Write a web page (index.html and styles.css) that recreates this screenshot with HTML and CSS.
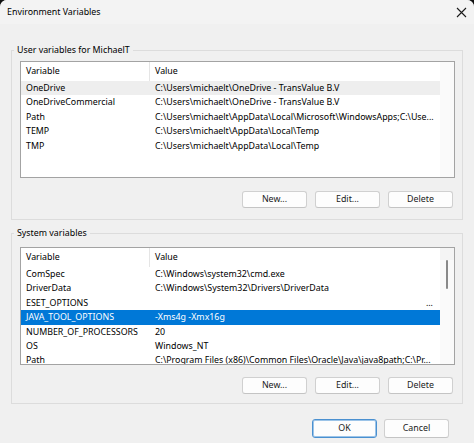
FILE: index.html
```html
<!DOCTYPE html>
<html>
<head>
<meta charset="utf-8">
<link rel="stylesheet" href="styles.css">
</head>
<body>
<div class="frame">
  <div class="window">
    <div class="titlebar">
      <span class="title">Environment Variables</span>
      <svg class="close" width="11" height="11" viewBox="0 0 11 11"><path d="M1 1 L10 10 M10 1 L1 10" stroke="#1a1a1a" stroke-width="1.1" fill="none"/></svg>
    </div>

    <fieldset class="group group-user">
      <legend>User variables for MichaelT</legend>
      <div class="list list-user">
        <div class="list-main">
          <div class="row head"><span class="c1">Variable</span><span class="c2">Value</span></div>
          <div class="row hover"><span class="c1">OneDrive</span><span class="c2">C:\Users\michaelt\OneDrive - TransValue B.V</span></div>
          <div class="row"><span class="c1">OneDriveCommercial</span><span class="c2">C:\Users\michaelt\OneDrive - TransValue B.V</span></div>
          <div class="row"><span class="c1">Path</span><span class="c2">C:\Users\michaelt\AppData\Local\Microsoft\WindowsApps;C:\Use...</span></div>
          <div class="row"><span class="c1">TEMP</span><span class="c2">C:\Users\michaelt\AppData\Local\Temp</span></div>
          <div class="row"><span class="c1">TMP</span><span class="c2">C:\Users\michaelt\AppData\Local\Temp</span></div>
        </div>
        <div class="gutter"></div>
      </div>
      <div class="buttons">
        <button class="btn">New...</button>
        <button class="btn">Edit...</button>
        <button class="btn">Delete</button>
      </div>
    </fieldset>

    <fieldset class="group group-sys">
      <legend>System variables</legend>
      <div class="list list-sys">
        <div class="list-main">
          <div class="row head"><span class="c1">Variable</span><span class="c2">Value</span></div>
          <div class="row"><span class="c1">ComSpec</span><span class="c2">C:\Windows\system32\cmd.exe</span></div>
          <div class="row"><span class="c1">DriverData</span><span class="c2">C:\Windows\System32\Drivers\DriverData</span></div>
          <div class="row"><span class="c1">ESET_OPTIONS</span><span class="c2 dots">...</span></div>
          <div class="row selected"><span class="c1">JAVA_TOOL_OPTIONS</span><span class="c2">-Xms4g -Xmx16g</span></div>
          <div class="row"><span class="c1">NUMBER_OF_PROCESSORS</span><span class="c2">20</span></div>
          <div class="row"><span class="c1">OS</span><span class="c2">Windows_NT</span></div>
          <div class="row"><span class="c1">Path</span><span class="c2">C:\Program Files (x86)\Common Files\Oracle\Java\java8path;C:\Pr...</span></div>
        </div>
        <div class="gutter scroll">
          <div class="gutter-top"></div>
          <div class="thumb"></div>
        </div>
      </div>
      <div class="buttons">
        <button class="btn">New...</button>
        <button class="btn">Edit...</button>
        <button class="btn">Delete</button>
      </div>
    </fieldset>

    <div class="footer">
      <button class="btn btn-default">OK</button>
      <button class="btn">Cancel</button>
    </div>
  </div>
</div>
</body>
</html>
```

FILE: styles.css
```css
html, body {
  margin: 0;
  padding: 0;
  background: #ffffff;
}

.frame {
  width: 474px;
  height: 448px;
  background: linear-gradient(#111 0, #111 12px, #ffffff 12px);
}

.window {
  width: 474px;
  height: 443px;
  background: #f0f0f0;
  border-radius: 7px 7px 0 0;
  font-family: "Noto Sans", "Open Sans", sans-serif;
  font-size: 8.85px;
  color: #000;
  display: flex;
  flex-direction: column;
  overflow: hidden;
}

.titlebar {
  height: 24px;
  flex: none;
  background: #f3f3f3;
  display: flex;
  align-items: center;
  justify-content: space-between;
  padding: 0 7px 0 7px;
}

.title {
  line-height: 12px;
}

.close {
  display: block;
  flex: none;
}

.group {
  border: 1px solid #dcdcdc;
  margin: 0 0 0 11px;
  padding: 0;
  width: 452px;
  box-sizing: border-box;
  min-width: 0;
}

.group legend {
  padding: 0 3px;
  margin-left: 2px;
  line-height: 12px;
}

.group-user {
  margin-top: 20px;
  padding-bottom: 11px;
}

.group-sys {
  margin-top: 7px;
  padding-bottom: 9px;
}

.list {
  margin-left: 8px;
  width: 435px;
  box-sizing: border-box;
  border: 1px solid #a3a3a3;
  background: #ffffff;
  display: flex;
  overflow: hidden;
}

.list-user {
  margin-top: 5px;
  height: 117px;
}

.list-sys {
  margin-top: 8px;
  height: 118px;
}

.list-main {
  flex: 1;
  min-width: 0;
}

.row {
  display: flex;
  height: 14.4px;
  line-height: 14.4px;
  white-space: nowrap;
}

.row.head {
  height: 19px;
  line-height: 19px;
}

.row.head .c1 {
  border-right: 1px solid #e5e5e5;
}

.row.hover {
  background: #eeeeee;
}

.row.selected {
  background: #0078d7;
  color: #ffffff;
}

.c1 {
  width: 129px;
  flex: none;
  padding-left: 5px;
  box-sizing: border-box;
}

.c2 {
  flex: 1;
  padding-left: 5px;
  overflow: hidden;
}

.dots {
  text-align: right;
  padding-right: 7px;
}

.gutter {
  width: 14px;
  flex: none;
  background: #fafafa;
}

.gutter.scroll {
  display: flex;
  flex-direction: column;
  align-items: center;
}

.gutter-top {
  width: 14px;
  height: 12px;
  background: #f4f4f4;
}

.thumb {
  width: 2.5px;
  height: 29px;
  border-radius: 2px;
  background: #8a8a8a;
}

.buttons {
  display: flex;
  justify-content: flex-end;
  gap: 8px;
  padding-right: 9px;
}

.group-user .buttons {
  margin-top: 13px;
}

.group-sys .buttons {
  margin-top: 12px;
}

.btn {
  width: 65px;
  height: 17px;
  box-sizing: border-box;
  border: 1px solid #d0d0d0;
  border-bottom-color: #c4c4c4;
  border-radius: 3px;
  background: #fdfdfd;
  font-family: "Noto Sans", "Open Sans", sans-serif;
  font-size: 8.85px;
  color: #1a1a1a;
  padding: 0;
  line-height: 15px;
}

.footer {
  display: flex;
  justify-content: flex-end;
  gap: 7px;
  padding-right: 25px;
  margin-top: 15px;
}

.footer .btn {
  height: 19px;
  line-height: 17px;
}

.btn-default {
  border: 1px solid #4a90d0;
  box-shadow: inset 0 0 0 1px #9cc4e8;
}
```
